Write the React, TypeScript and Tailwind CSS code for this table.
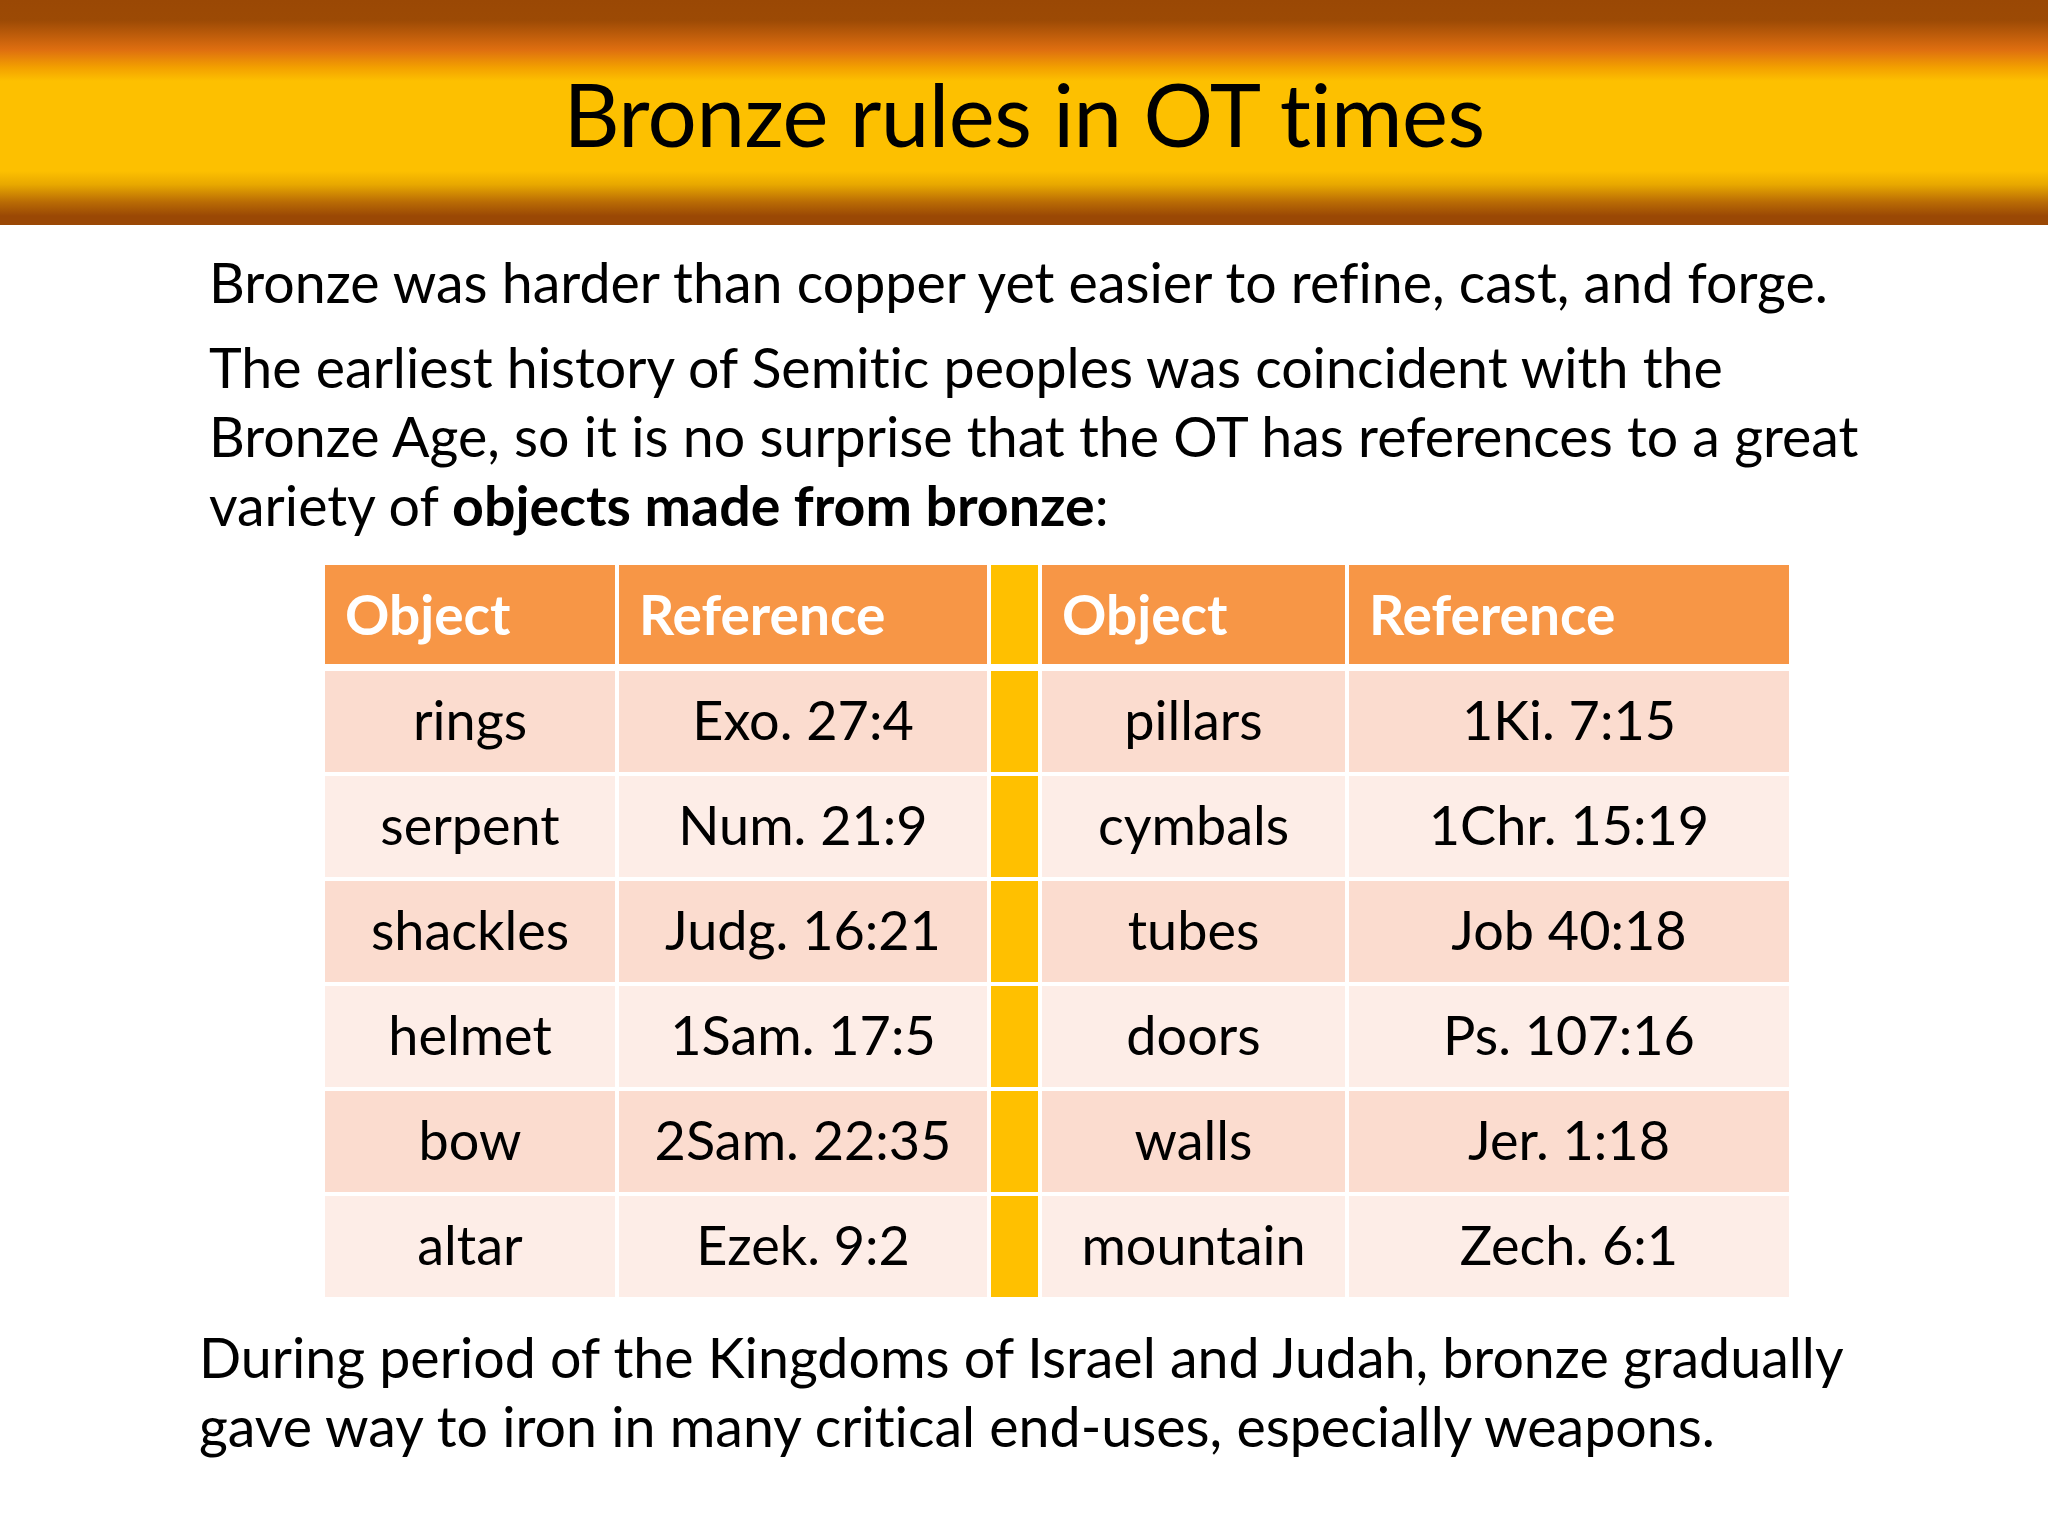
import React from 'react';

const rows = [
  ['rings', 'Exo. 27:4', 'pillars', '1Ki. 7:15'],
  ['serpent', 'Num. 21:9', 'cymbals', '1Chr. 15:19'],
  ['shackles', 'Judg. 16:21', 'tubes', 'Job 40:18'],
  ['helmet', '1Sam. 17:5', 'doors', 'Ps. 107:16'],
  ['bow', '2Sam. 22:35', 'walls', 'Jer. 1:18'],
  ['altar', 'Ezek. 9:2', 'mountain', 'Zech. 6:1'],
];

const gridCols = 'grid grid-cols-[290px_368px_47px_303px_440px] gap-x-[4px]';

export default function App() {
  return (
    <div className="w-[2048px] h-[1536px] bg-white text-black font-['Lato',sans-serif] [font-variant-ligatures:none] overflow-hidden">
      {/* Title bar */}
      <div className="h-[225px] flex items-center justify-center bg-[linear-gradient(to_bottom,#9a4805_0%,#9c4a05_9%,#de6e10_22%,#f3a000_30%,#fdc000_36%,#fdc000_76%,#e8a800_82%,#b86a05_90%,#9a4805_96%,#9a4805_100%)]">
        <h1 className="text-[87px] leading-none pt-[2px] tracking-[-0.5px]">Bronze rules in OT times</h1>
      </div>

      {/* Intro text */}
      <div className="pl-[209px] pt-[22px] text-[55.5px] leading-[69px]">
        <p>Bronze was harder than copper yet easier to refine, cast, and forge.</p>
        <p className="mt-[16px]">
          The earliest history of Semitic peoples was coincident with the
          <br />
          Bronze Age, so it is no surprise that the OT has references to a great
          <br />
          variety of <b className="font-bold">objects made from bronze</b>:
        </p>
      </div>

      {/* Table */}
      <div className="ml-[325px] mt-[26px] w-[1464px] text-[54px]">
        <div className={`${gridCols} h-[99px]`}>
          <div className="bg-[#f79646] text-white font-bold text-[55px] flex items-center pl-[20px]">Object</div>
          <div className="bg-[#f79646] text-white font-bold text-[55px] flex items-center pl-[20px]">Reference</div>
          <div className="bg-[#ffc000]" />
          <div className="bg-[#f79646] text-white font-bold text-[55px] flex items-center pl-[20px]">Object</div>
          <div className="bg-[#f79646] text-white font-bold text-[55px] flex items-center pl-[20px]">Reference</div>
        </div>
        <div className="mt-[7px] flex flex-col gap-[4px]">
          {rows.map((r, i) => {
            const bg = i % 2 === 0 ? 'bg-[#fbdccf]' : 'bg-[#fdede7]';
            return (
              <div key={i} className={`${gridCols} h-[101px]`}>
                <div className={`${bg} flex items-center justify-center pb-[5px]`}>{r[0]}</div>
                <div className={`${bg} flex items-center justify-center pb-[5px]`}>{r[1]}</div>
                <div className="bg-[#ffc000]" />
                <div className={`${bg} flex items-center justify-center pb-[5px]`}>{r[2]}</div>
                <div className={`${bg} flex items-center justify-center pb-[5px]`}>{r[3]}</div>
              </div>
            );
          })}
        </div>
      </div>

      {/* Closing text */}
      <div className="pl-[199px] pt-[25px] text-[55.5px] leading-[69px]">
        <p>
          During period of the Kingdoms of Israel and Judah, bronze gradually
          <br />
          gave way to iron in many critical end-uses, especially weapons.
        </p>
      </div>
    </div>
  );
}
